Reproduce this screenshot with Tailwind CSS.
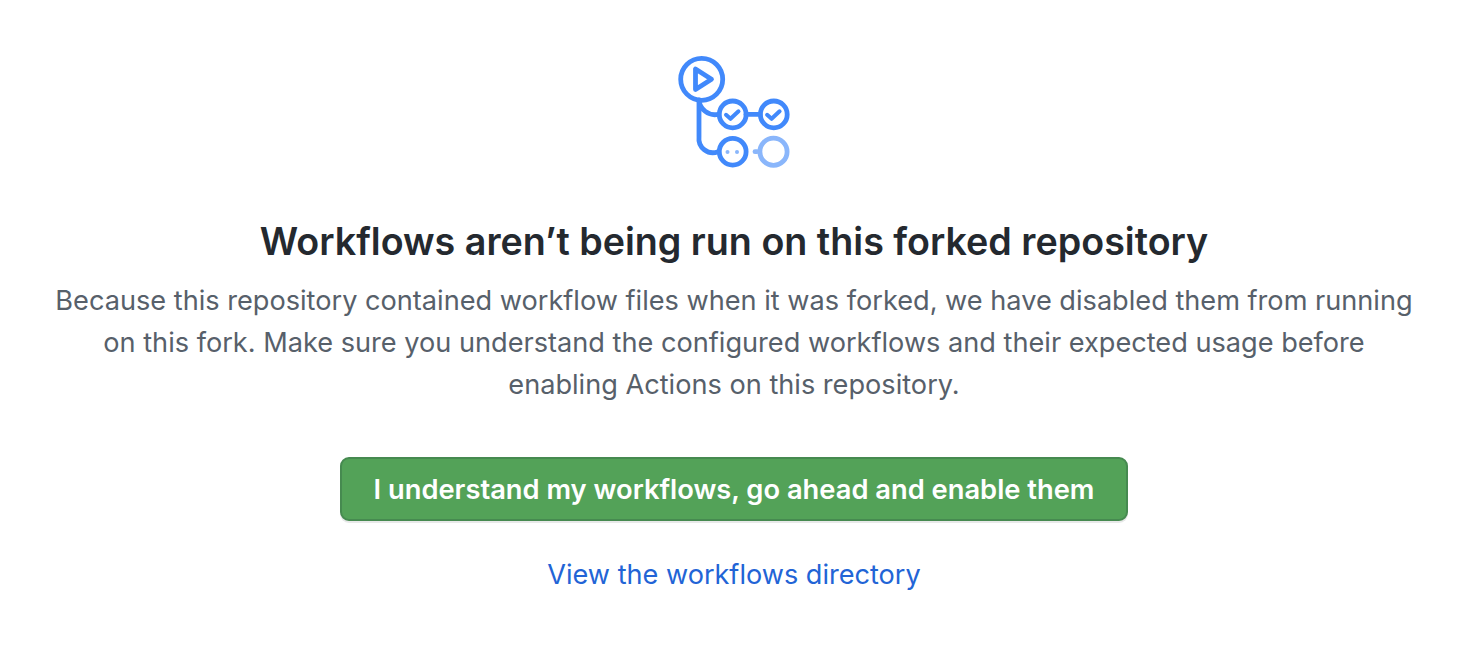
<!DOCTYPE html>
<html lang="en">
<head>
    <meta charset="UTF-8">
    <title>Actions</title>
    <script src="https://cdn.jsdelivr.net/npm/@tailwindcss/browser@4"></script>
</head>
<body class="bg-white font-['Inter',sans-serif]">
    <div class="w-[1466px] h-[672px] flex flex-col items-center pt-[45px] pl-[2px] overflow-hidden">
        <svg class="w-[145px] h-[130px] block mr-[3px]" viewBox="660 45 145 130" fill="none" stroke="#4189fb" stroke-width="4.8" stroke-linecap="round" stroke-linejoin="round">
            <circle cx="701.7" cy="79.3" r="21"/>
            <path d="M695.5 69v20.5l16-10.2z"/>
            <path d="M699 102v35a14 14 0 0 0 19 14.7"/>
            <path d="M699 100a16 16 0 0 0 19 14.4"/>
            <circle cx="732.7" cy="114.4" r="13.4"/>
            <circle cx="773.8" cy="114.4" r="13.4"/>
            <path d="M746 114.4h14"/>
            <path d="M726 114.8l4.5 4 8-7.5" stroke-width="4"/>
            <path d="M767.1 114.8l4.5 4 8-7.5" stroke-width="4"/>
            <circle cx="732.7" cy="151.7" r="13.4"/>
            <circle cx="727.5" cy="152" r="2" fill="#8ab6fb" stroke="none"/>
            <circle cx="737" cy="152" r="2" fill="#8ab6fb" stroke="none"/>
            <circle cx="773.5" cy="151.7" r="13.6" stroke="#8ab6fb"/>
            <path d="M755 151.7h2" stroke="#8ab6fb"/>
        </svg>
        <h2 class="mt-[42px] text-[37.66px] leading-[50px] font-semibold text-[#24292f]">Workflows aren’t being run on this forked repository</h2>
        <p class="mt-[13px] w-[1365px] text-center text-[27.15px] leading-[42px] text-[#57606a]">Because this repository contained workflow files when it was forked, we have disabled them from running on this fork. Make sure you understand the configured workflows and their expected usage before enabling Actions on this repository.</p>
        <button class="mt-[51px] w-[788px] h-[64px] pt-[2px] rounded-[9px] border-2 border-[#468a50] bg-[#53a258] text-white text-[27.3px] font-semibold shadow-[0_2px_0_rgba(31,35,40,0.1)]">I understand my workflows, go ahead and enable them</button>
        <a href="#" class="mt-[33px] text-[27.1px] leading-[42px] text-[#2264d6]">View the workflows directory</a>
    </div>
</body>
</html>
